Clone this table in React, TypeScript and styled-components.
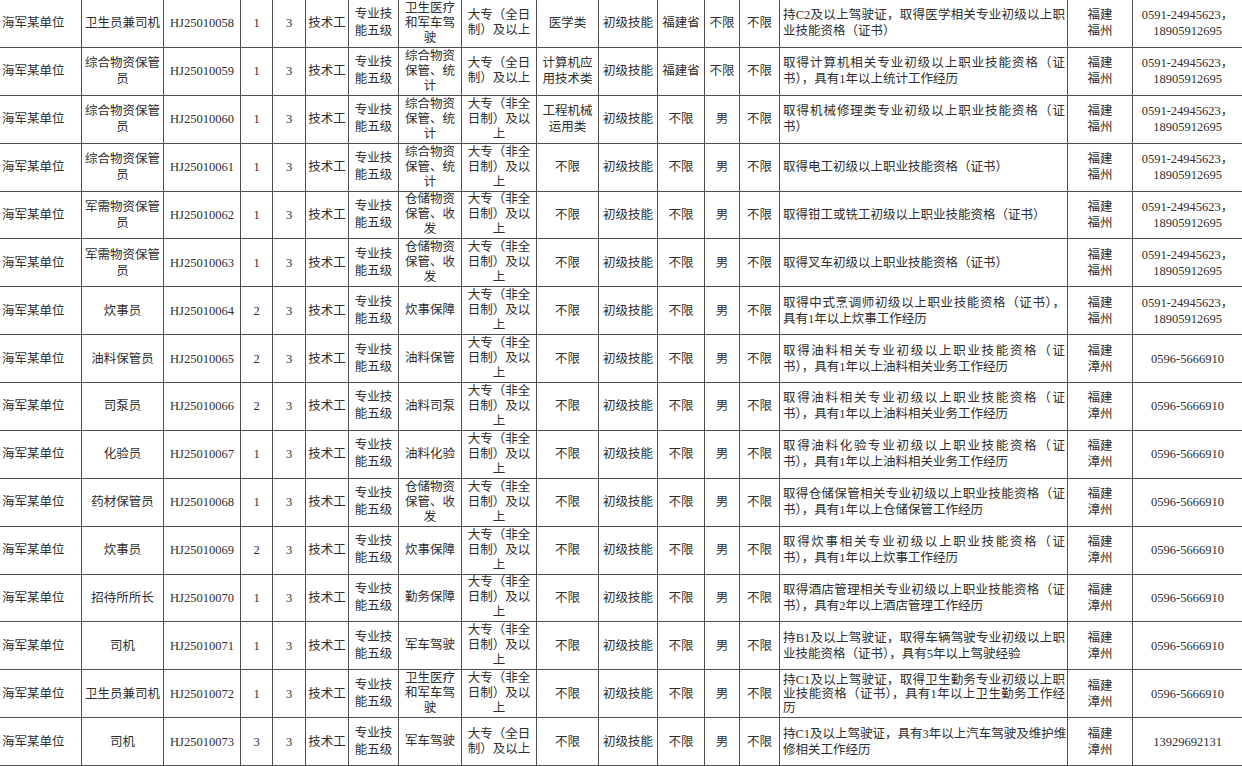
import React from "react";
import styled, { createGlobalStyle } from "styled-components";

const GlobalStyle = createGlobalStyle`
  html, body {
    margin: 0;
    padding: 0;
    background: #ffffff;
  }
  body {
    font-family: "Liberation Serif", "Noto Sans CJK SC", serif;
    color: #2e2e2e;
  }
`;

const COLS = [82, 82, 77, 32, 33, 43, 50, 63, 75, 62, 59, 47, 35, 40, 288, 65, 109];

const Sheet = styled.div`
  display: grid;
  grid-template-columns: ${COLS.map((c) => `${c}px`).join(" ")};
  grid-template-rows: repeat(16, 1fr);
  width: 1242px;
  height: 766px;
  overflow: hidden;
  font-size: 12.5px;
  font-weight: 400;
`;

const Row = styled.div`
  display: contents;
`;

const Cell = styled.div<{ $align?: "left" | "center"; $lh?: number; $last?: boolean }>`
  display: flex;
  align-items: center;
  justify-content: ${(p) => (p.$align === "left" ? "flex-start" : "center")};
  text-align: ${(p) => p.$align ?? "center"};
  line-height: ${(p) => p.$lh ?? 16}px;
  padding: ${(p) => (p.$align === "left" ? "0 0 0 2px" : "0 1px")};
  border-right: ${(p) => (p.$last ? "none" : "1px solid #4e4e4e")};
  border-bottom: 1px solid #4e4e4e;
  box-sizing: border-box;
  min-width: 0;
  overflow: hidden;
`;

const Stack = styled.div`
  display: flex;
  flex-direction: column;
  align-items: center;
`;

const ReqCell = styled.div<{ $lh: number }>`
  display: flex;
  flex-direction: column;
  justify-content: center;
  padding: 0 2px 0 3px;
  line-height: ${(p) => p.$lh}px;
  border-right: 1px solid #4e4e4e;
  border-bottom: 1px solid #4e4e4e;
  box-sizing: border-box;
  min-width: 0;
  overflow: hidden;
`;

const ReqLine = styled.span<{ $fill: boolean }>`
  display: block;
  white-space: nowrap;
  text-align: ${(p) => (p.$fill ? "justify" : "left")};
  text-align-last: ${(p) => (p.$fill ? "justify" : "auto")};
`;

type Job = {
  post: string;
  code: string;
  num: number;
  edu: string;
  major: string;
  origin: string;
  sex: string;
  spec: string;
  req: string[];
  city: string;
  phone: string;
};

const FZ = "0591-24945623，18905912695";
const ZZ = "0596-5666910";
const FULL = "大专（全日制）及以上";
const PART = "大专（非全日制）及以上";

const jobs: Job[] = [
  { post: "卫生员兼司机", code: "HJ25010058", num: 1, spec: "卫生医疗和军车驾驶", edu: FULL, major: "医学类", origin: "福建省", sex: "不限", req: ["持C2及以上驾驶证，取得医学相关专业初级以上职", "业技能资格（证书）"], city: "福州", phone: FZ },
  { post: "综合物资保管员", code: "HJ25010059", num: 1, spec: "综合物资保管、统计", edu: FULL, major: "计算机应用技术类", origin: "福建省", sex: "不限", req: ["取得计算机相关专业初级以上职业技能资格（证", "书），具有1年以上统计工作经历"], city: "福州", phone: FZ },
  { post: "综合物资保管员", code: "HJ25010060", num: 1, spec: "综合物资保管、统计", edu: PART, major: "工程机械运用类", origin: "不限", sex: "男", req: ["取得机械修理类专业初级以上职业技能资格（证", "书）"], city: "福州", phone: FZ },
  { post: "综合物资保管员", code: "HJ25010061", num: 1, spec: "综合物资保管、统计", edu: PART, major: "不限", origin: "不限", sex: "男", req: ["取得电工初级以上职业技能资格（证书）"], city: "福州", phone: FZ },
  { post: "军需物资保管员", code: "HJ25010062", num: 1, spec: "仓储物资保管、收发", edu: PART, major: "不限", origin: "不限", sex: "男", req: ["取得钳工或铣工初级以上职业技能资格（证书）"], city: "福州", phone: FZ },
  { post: "军需物资保管员", code: "HJ25010063", num: 1, spec: "仓储物资保管、收发", edu: PART, major: "不限", origin: "不限", sex: "男", req: ["取得叉车初级以上职业技能资格（证书）"], city: "福州", phone: FZ },
  { post: "炊事员", code: "HJ25010064", num: 2, spec: "炊事保障", edu: PART, major: "不限", origin: "不限", sex: "男", req: ["取得中式烹调师初级以上职业技能资格（证书），", "具有1年以上炊事工作经历"], city: "福州", phone: FZ },
  { post: "油料保管员", code: "HJ25010065", num: 2, spec: "油料保管", edu: PART, major: "不限", origin: "不限", sex: "男", req: ["取得油料相关专业初级以上职业技能资格（证", "书），具有1年以上油料相关业务工作经历"], city: "漳州", phone: ZZ },
  { post: "司泵员", code: "HJ25010066", num: 2, spec: "油料司泵", edu: PART, major: "不限", origin: "不限", sex: "男", req: ["取得油料相关专业初级以上职业技能资格（证", "书），具有1年以上油料相关业务工作经历"], city: "漳州", phone: ZZ },
  { post: "化验员", code: "HJ25010067", num: 1, spec: "油料化验", edu: PART, major: "不限", origin: "不限", sex: "男", req: ["取得油料化验专业初级以上职业技能资格（证", "书），具有1年以上油料相关业务工作经历"], city: "漳州", phone: ZZ },
  { post: "药材保管员", code: "HJ25010068", num: 1, spec: "仓储物资保管、收发", edu: PART, major: "不限", origin: "不限", sex: "男", req: ["取得仓储保管相关专业初级以上职业技能资格（证", "书），具有1年以上仓储保管工作经历"], city: "漳州", phone: ZZ },
  { post: "炊事员", code: "HJ25010069", num: 2, spec: "炊事保障", edu: PART, major: "不限", origin: "不限", sex: "男", req: ["取得炊事相关专业初级以上职业技能资格（证", "书），具有1年以上炊事工作经历"], city: "漳州", phone: ZZ },
  { post: "招待所所长", code: "HJ25010070", num: 1, spec: "勤务保障", edu: PART, major: "不限", origin: "不限", sex: "男", req: ["取得酒店管理相关专业初级以上职业技能资格（证", "书），具有2年以上酒店管理工作经历"], city: "漳州", phone: ZZ },
  { post: "司机", code: "HJ25010071", num: 1, spec: "军车驾驶", edu: PART, major: "不限", origin: "不限", sex: "男", req: ["持B1及以上驾驶证，取得车辆驾驶专业初级以上职", "业技能资格（证书），具有5年以上驾驶经验"], city: "漳州", phone: ZZ },
  { post: "卫生员兼司机", code: "HJ25010072", num: 1, spec: "卫生医疗和军车驾驶", edu: PART, major: "不限", origin: "不限", sex: "男", req: ["持C1及以上驾驶证，取得卫生勤务专业初级以上职", "业技能资格（证书），具有1年以上卫生勤务工作经", "历"], city: "漳州", phone: ZZ },
  { post: "司机", code: "HJ25010073", num: 3, spec: "军车驾驶", edu: FULL, major: "不限", origin: "不限", sex: "男", req: ["持C1及以上驾驶证，具有3年以上汽车驾驶及维护维", "修相关工作经历"], city: "漳州", phone: "13929692131" },
];

export default function App() {
  return (
    <>
      <GlobalStyle />
      <Sheet>
        {jobs.map((j) => (
          <Row key={j.code}>
            <Cell $align="left">海军某单位</Cell>
            <Cell>{j.post}</Cell>
            <Cell>{j.code}</Cell>
            <Cell>{j.num}</Cell>
            <Cell>3</Cell>
            <Cell>技术工</Cell>
            <Cell $lh={17}>专业技能五级</Cell>
            <Cell $lh={15}>{j.spec}</Cell>
            <Cell $lh={15}>{j.edu}</Cell>
            <Cell>{j.major}</Cell>
            <Cell>初级技能</Cell>
            <Cell>{j.origin}</Cell>
            <Cell>{j.sex}</Cell>
            <Cell>不限</Cell>
            <ReqCell $lh={j.req.length > 2 ? 14 : 16}>
              {j.req.map((line, i) => (
                <ReqLine key={i} $fill={i < j.req.length - 1}>
                  {line}
                </ReqLine>
              ))}
            </ReqCell>
            <Cell>
              <Stack>
                <span>福建</span>
                <span>{j.city}</span>
              </Stack>
            </Cell>
            <Cell $last>{j.phone}</Cell>
          </Row>
        ))}
      </Sheet>
    </>
  );
}
